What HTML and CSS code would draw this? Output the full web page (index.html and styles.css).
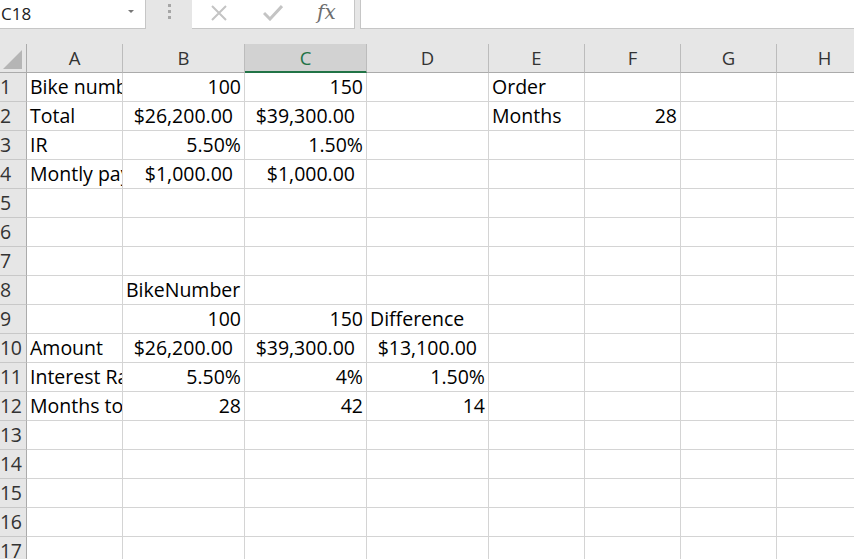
FILE: index.html
```html
<!DOCTYPE html>
<html lang="en">
<head>
  <meta charset="UTF-8">
  <title>Book1 - Excel</title>
  <link rel="stylesheet" href="styles.css">
</head>
<body>

<div class="toolbar">
  <div class="namebox">
    <span>C18</span>
    <span class="arrow"></span>
  </div>
  <div class="grip"><i></i><i></i><i></i></div>
  <div class="fxbox">
    <svg class="ico" width="18" height="16" viewBox="0 0 18 16">
      <path d="M2 1 L16 15 M16 1 L2 15" stroke="#c4c4c4" stroke-width="2" fill="none"/>
    </svg>
    <svg class="ico" width="20" height="16" viewBox="0 0 20 16">
      <path d="M1 8 L7 14 L19 1" stroke="#c4c4c4" stroke-width="3" fill="none"/>
    </svg>
    <span class="fx">fx</span>
  </div>
  <div class="formula"></div>
</div>

<div class="sheet">
  <!-- column headers -->
  <div class="corner"><span class="tri"></span></div>
  <div class="colh">A</div>
  <div class="colh">B</div>
  <div class="colh sel">C</div>
  <div class="colh">D</div>
  <div class="colh">E</div>
  <div class="colh">F</div>
  <div class="colh">G</div>
  <div class="colh">H</div>

  <div class="rowh">1</div>
  <div class="cell">Bike number</div>
  <div class="cell num">100</div>
  <div class="cell num">150</div>
  <div class="cell"></div>
  <div class="cell">Order</div>
  <div class="cell"></div>
  <div class="cell"></div>
  <div class="cell"></div>

  <div class="rowh">2</div>
  <div class="cell">Total</div>
  <div class="cell acc">$26,200.00</div>
  <div class="cell acc">$39,300.00</div>
  <div class="cell"></div>
  <div class="cell">Months</div>
  <div class="cell num">28</div>
  <div class="cell"></div>
  <div class="cell"></div>

  <div class="rowh">3</div>
  <div class="cell">IR</div>
  <div class="cell num">5.50%</div>
  <div class="cell num">1.50%</div>
  <div class="cell"></div>
  <div class="cell"></div>
  <div class="cell"></div>
  <div class="cell"></div>
  <div class="cell"></div>

  <div class="rowh">4</div>
  <div class="cell">Montly payment</div>
  <div class="cell acc">$1,000.00</div>
  <div class="cell acc">$1,000.00</div>
  <div class="cell"></div>
  <div class="cell"></div>
  <div class="cell"></div>
  <div class="cell"></div>
  <div class="cell"></div>

  <div class="rowh">5</div>
  <div class="cell"></div><div class="cell"></div><div class="cell"></div><div class="cell"></div>
  <div class="cell"></div><div class="cell"></div><div class="cell"></div><div class="cell"></div>

  <div class="rowh">6</div>
  <div class="cell"></div><div class="cell"></div><div class="cell"></div><div class="cell"></div>
  <div class="cell"></div><div class="cell"></div><div class="cell"></div><div class="cell"></div>

  <div class="rowh">7</div>
  <div class="cell"></div><div class="cell"></div><div class="cell"></div><div class="cell"></div>
  <div class="cell"></div><div class="cell"></div><div class="cell"></div><div class="cell"></div>

  <div class="rowh">8</div>
  <div class="cell"></div>
  <div class="cell">BikeNumber</div>
  <div class="cell"></div>
  <div class="cell"></div>
  <div class="cell"></div>
  <div class="cell"></div>
  <div class="cell"></div>
  <div class="cell"></div>

  <div class="rowh">9</div>
  <div class="cell"></div>
  <div class="cell num">100</div>
  <div class="cell num">150</div>
  <div class="cell">Difference</div>
  <div class="cell"></div>
  <div class="cell"></div>
  <div class="cell"></div>
  <div class="cell"></div>

  <div class="rowh">10</div>
  <div class="cell">Amount</div>
  <div class="cell acc">$26,200.00</div>
  <div class="cell acc">$39,300.00</div>
  <div class="cell acc">$13,100.00</div>
  <div class="cell"></div>
  <div class="cell"></div>
  <div class="cell"></div>
  <div class="cell"></div>

  <div class="rowh">11</div>
  <div class="cell">Interest Rate</div>
  <div class="cell num">5.50%</div>
  <div class="cell num">4%</div>
  <div class="cell num">1.50%</div>
  <div class="cell"></div>
  <div class="cell"></div>
  <div class="cell"></div>
  <div class="cell"></div>

  <div class="rowh">12</div>
  <div class="cell">Months to pay</div>
  <div class="cell num">28</div>
  <div class="cell num">42</div>
  <div class="cell num">14</div>
  <div class="cell"></div>
  <div class="cell"></div>
  <div class="cell"></div>
  <div class="cell"></div>

  <div class="rowh">13</div>
  <div class="cell"></div><div class="cell"></div><div class="cell"></div><div class="cell"></div>
  <div class="cell"></div><div class="cell"></div><div class="cell"></div><div class="cell"></div>

  <div class="rowh">14</div>
  <div class="cell"></div><div class="cell"></div><div class="cell"></div><div class="cell"></div>
  <div class="cell"></div><div class="cell"></div><div class="cell"></div><div class="cell"></div>

  <div class="rowh">15</div>
  <div class="cell"></div><div class="cell"></div><div class="cell"></div><div class="cell"></div>
  <div class="cell"></div><div class="cell"></div><div class="cell"></div><div class="cell"></div>

  <div class="rowh">16</div>
  <div class="cell"></div><div class="cell"></div><div class="cell"></div><div class="cell"></div>
  <div class="cell"></div><div class="cell"></div><div class="cell"></div><div class="cell"></div>

  <div class="rowh">17</div>
  <div class="cell"></div><div class="cell"></div><div class="cell"></div><div class="cell"></div>
  <div class="cell"></div><div class="cell"></div><div class="cell"></div><div class="cell"></div>
</div>

</body>
</html>
```

FILE: styles.css
```css
body {
  margin: 0;
  height: 559px;
  background-color: #e6e6e6;
  font-family: "Open Sans", "Liberation Sans", sans-serif;
  color: #000;
  overflow: hidden;
}

/* Formula bar */
.toolbar {
  display: flex;
  height: 44px;
  background-color: #e6e6e6;
}

.namebox,
.fxbox,
.formula {
  box-sizing: border-box;
  height: 29px;
  background-color: #fff;
  border-right: 1px solid #c6c6c6;
  border-bottom: 1px solid #c6c6c6;
}

.namebox {
  width: 146px;
  display: flex;
  align-items: center;
  justify-content: space-between;
  padding: 0 11px 1px 1px;
  font-size: 17px;
  color: #222;
}

.arrow {
  width: 0;
  height: 0;
  border-left: 3px solid transparent;
  border-right: 3px solid transparent;
  border-top: 3px solid #777;
  margin-top: -4px;
}

.grip {
  width: 46px;
  display: flex;
  flex-direction: column;
  align-items: center;
  gap: 3px;
  padding-top: 4px;
  box-sizing: border-box;
}

.grip i {
  display: block;
  width: 3px;
  height: 3px;
  background-color: #a6a6a6;
}

.fxbox {
  width: 163px;
  display: flex;
  align-items: center;
  padding: 0 0 2px 18px;
  gap: 35px;
}

.fx {
  font-family: "DejaVu Serif", serif;
  font-style: italic;
  font-size: 20px;
  color: #6e6e6e;
  margin-left: -1px;
  margin-top: -3px;
}

.formula {
  flex: 1;
  margin-left: 5px;
  border-right: none;
  border-left: 1px solid #c6c6c6;
}

/* Grid */
.sheet {
  display: grid;
  grid-template-columns: 27px 96px 122px 122px 122px 96px 96px 96px 96px;
  grid-auto-rows: 29px;
  width: 873px;
  background-color: #fff;
  font-size: 19.5px;
}

.sheet > div {
  box-sizing: border-box;
  line-height: 28px;
  white-space: nowrap;
  overflow: hidden;
}

.corner,
.colh,
.rowh {
  background-color: #e6e6e6;
  color: #333;
}

.corner {
  position: relative;
  border-right: 1px solid #ababab;
  border-bottom: 1px solid #ababab;
}

.tri {
  position: absolute;
  right: 4px;
  bottom: 3px;
  width: 0;
  height: 0;
  border-left: 19px solid transparent;
  border-bottom: 19px solid #b5b5b5;
}

.colh {
  text-align: center;
  font-size: 18.5px;
  border-right: 1px solid #bcbcbc;
  border-bottom: 1px solid #ababab;
}

.colh.sel {
  background-color: #d2d2d2;
  color: #217346;
  border-bottom: 2px solid #217346;
  line-height: 27px;
}

.rowh {
  border-right: 1px solid #ababab;
  border-bottom: 1px solid #c8c8c8;
  padding-left: 0;
  letter-spacing: -0.5px;
}

.cell {
  border-right: 1px solid #d4d4d4;
  border-bottom: 1px solid #d4d4d4;
  padding: 0 3px 0 3px;
}

.num {
  text-align: right;
}

.acc {
  text-align: right;
  padding-right: 11px;
}
```
